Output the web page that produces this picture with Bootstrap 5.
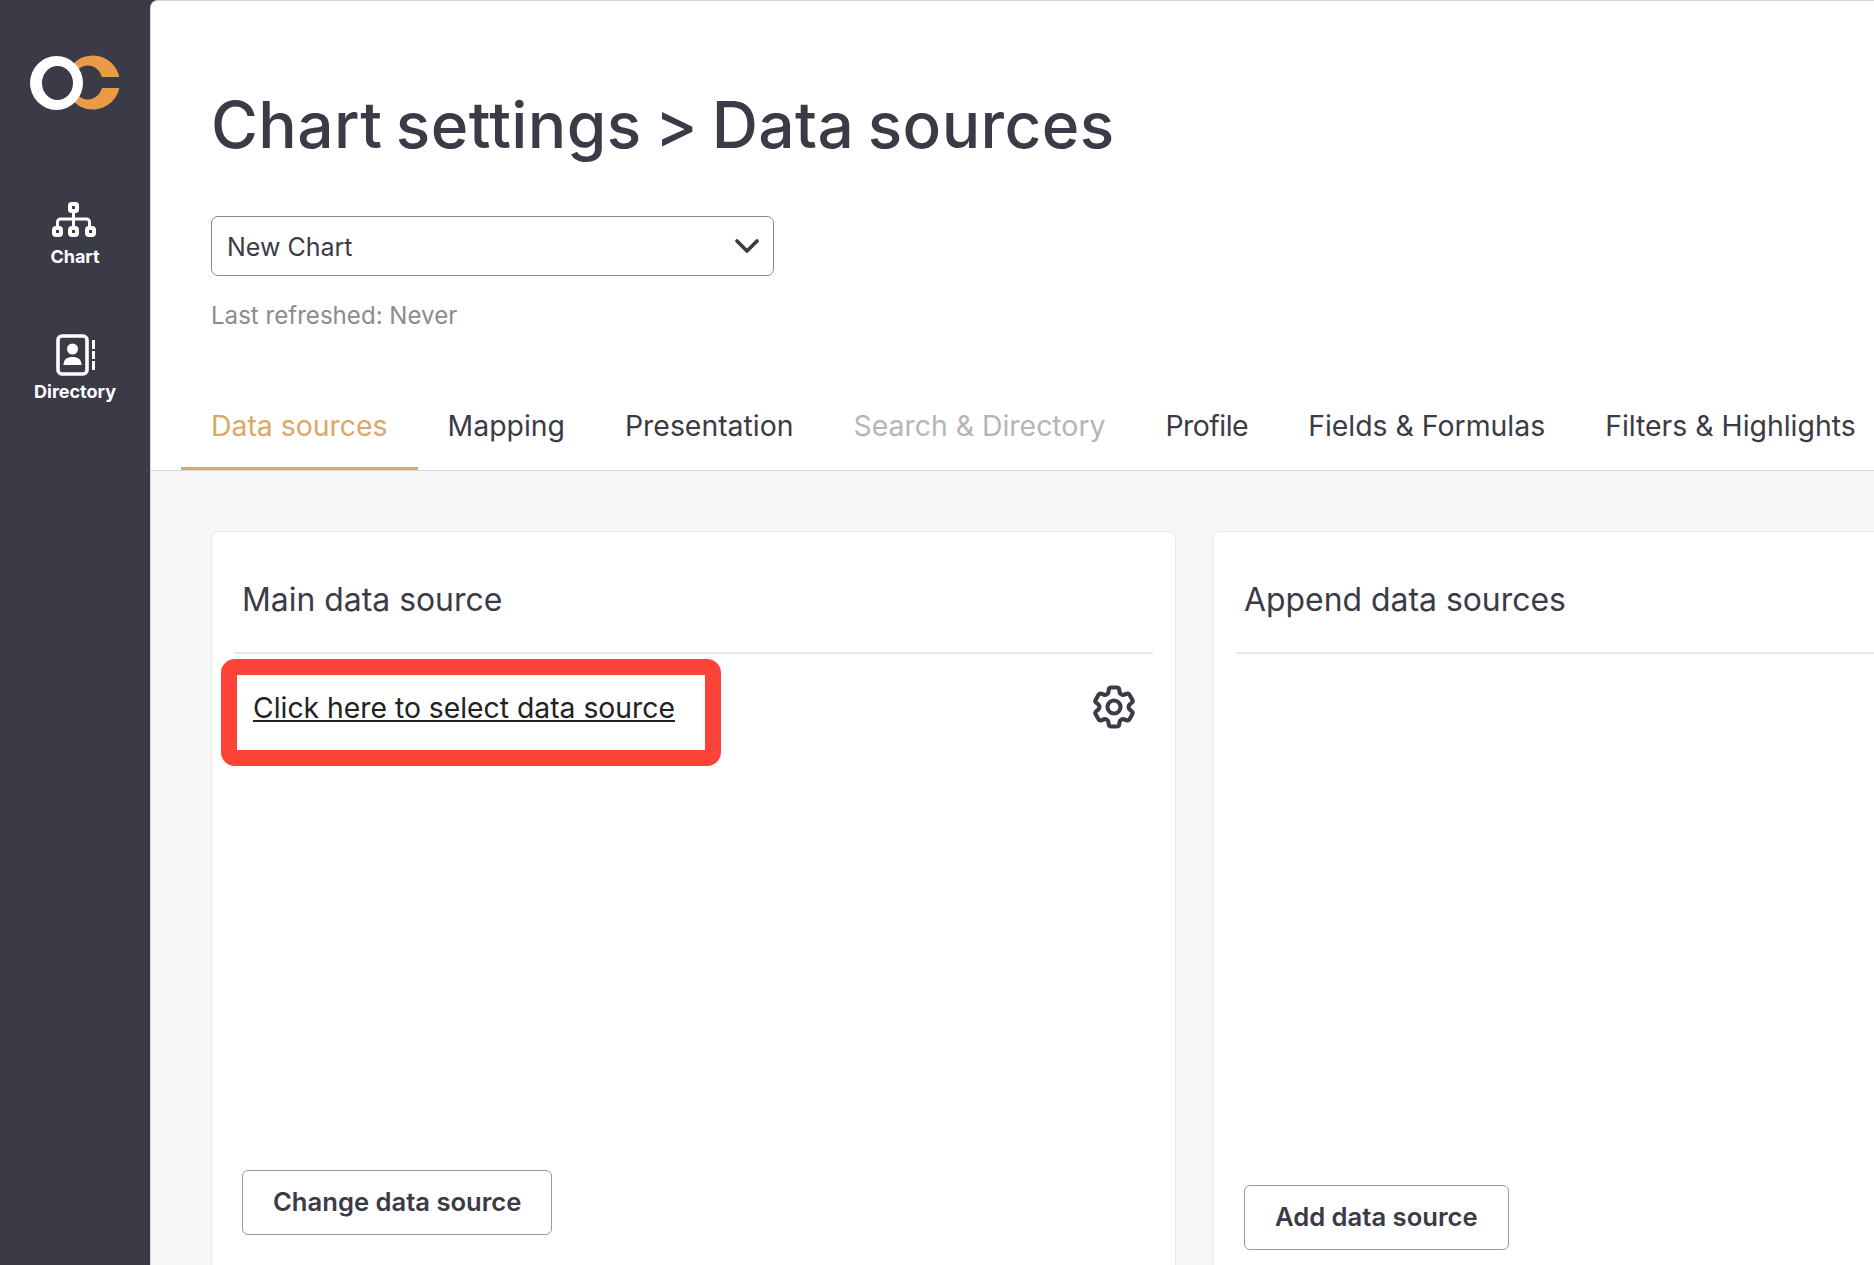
<!DOCTYPE html>
<html lang="en">
<head>
    <meta charset="UTF-8">
    <meta name="viewport" content="width=device-width, initial-scale=1.0">
    <title>Chart settings - Data sources</title>
    <link rel="stylesheet" href="https://cdn.jsdelivr.net/npm/bootstrap@5.3.0/dist/css/bootstrap.min.css">
    <style>
        html, body {
            height: 100%;
            overflow: hidden;
        }
        body {
            background-color: #3b3b47;
            font-family: Inter, "Liberation Sans", sans-serif;
            color: #3b3b47;
        }
        .app-side {
            width: 150px;
            height: 1265px;
            color: #fff;
        }
        .side-logo {
            padding-top: 55px;
            padding-left: 29px;
            height: 202px;
        }
        .side-item {
            font-size: 18px;
            font-weight: 700;
            line-height: 20px;
        }
        .side-chart { height: 132px; }
        .side-dir span { margin-top: 6px; }
        .app-main {
            width: 1724px;
            height: 1265px;
            background: #f7f7f7;
            border-top-left-radius: 8px;
            border-left: 1px solid #d8d8dc;
            border-top: 1px solid #d8d8dc;
            overflow: hidden;
        }
        .top-area {
            height: 470px;
            background: #fff;
            border-bottom: 1px solid #d8d8dc;
            padding: 85px 0 0 30px;
        }
        .page-title {
            font-size: 64px;
            font-weight: 500;
            line-height: 78px;
            letter-spacing: .4px;
            word-spacing: -4px;
            margin: 0 0 0 30px;
        }
        .chart-pick {
            width: 563px;
            height: 60px;
            margin: 52px 0 0 30px;
            font-size: 25px;
            color: #3b3b47;
            border: 1px solid #8a8a8a;
            border-radius: 7px;
            padding: 4px 15px 0;
            background-image: url("data:image/svg+xml,%3csvg xmlns='http://www.w3.org/2000/svg' viewBox='0 0 24 16'%3e%3cpath fill='none' stroke='%233b3b47' stroke-width='3.6' stroke-linecap='round' stroke-linejoin='round' d='M2 3l10 10L22 3'/%3e%3c/svg%3e");
            background-size: 24px 16px;
            background-position: right 14px center;
        }
        .refresh-note {
            font-size: 24.1px;
            line-height: 30px;
            color: #8c8c8c;
            margin: 25px 0 0 30px;
        }
        .tab-row {
            margin-top: 62px;
            flex-wrap: nowrap;
            white-space: nowrap;
        }
        .tab-row .nav-link {
            height: 77px;
            padding: 15px 30px 0;
            font-size: 28.4px;
            line-height: 36px;
            color: #3b3b47;
            border-bottom: 3px solid transparent;
        }
        .tab-row .nav-link.active {
            color: #dca767;
            border-bottom-color: #dca767;
        }
        .tab-row .nav-link.disabled {
            color: #b5b5b8;
        }
        .tab-row .nav-link.tab-tight {
            letter-spacing: -.5px;
        }
        .panels {
            gap: 37px;
            padding: 60px 0 0 60px;
        }
        .panel-card {
            width: 965px;
            height: 780px;
            flex-shrink: 0;
            border: 1px solid #e8e8ea;
            border-radius: 7px;
            padding: 0 22px;
        }
        .panel-head {
            font-size: 31.9px;
            line-height: 40px;
            font-weight: 400;
            padding: 48px 0 32px 8px;
            border-bottom: 2px solid #e8e8ea;
            margin: 0;
        }
        .source-row {
            height: 110px;
            padding: 32px 13px 0 19px;
        }
        .source-link {
            font-size: 28.3px;
            line-height: 44px;
            color: #222;
        }
        .gear-icon {
            width: 52px;
            height: 52px;
            margin-top: -5px;
        }
        .red-mark {
            position: absolute;
            left: -13px;
            top: 5px;
            width: 500px;
            height: 107px;
            border: 16px solid #fb4437;
            border-radius: 14px;
        }
        .outline-action {
            font-size: 25.6px;
            font-weight: 600;
            color: #3b3b47;
            height: 65px;
            border: 1px solid #999;
            border-radius: 6px;
            padding: 0 30px;
            margin-left: 8px;
        }
        .action-main { margin-top: 406px; }
        .action-add { margin-top: 531px; }
    </style>
</head>
<body>
    <div class="d-flex">
        <div class="app-side flex-shrink-0">
            <div class="side-logo">
                <svg width="94" height="58" viewBox="0 0 94 58">
                    <path d="M90.300 22A27 27 0 1 0 90.300 33L73 33A15 17 0 1 1 73 22Z" fill="#e99c45"/>
                    <ellipse cx="28.500" cy="28" rx="16" ry="18" fill="#3b3b47"/>
                    <path fill-rule="evenodd" fill="#fff" d="M1 28a26.500 27 0 1 0 53 0a26.500 27 0 1 0-53 0ZM13 28a15.500 17 0 1 1 31 0a15.500 17 0 1 1-31 0Z"/>
                </svg>
            </div>
            <div class="side-item side-chart d-flex flex-column align-items-center">
                <svg width="46" height="37" viewBox="0 0 46 37" fill="none" stroke="#fff">
                    <path stroke-width="3" d="M21.500 9v17M5.500 26v-6a3 3 0 0 1 3-3h26a3 3 0 0 1 3 3v6"/>
                    <g stroke-width="4">
                        <rect x="18" y="2" width="7" height="7" rx="1.500"/>
                        <rect x="2" y="26" width="7" height="7" rx="2"/>
                        <rect x="18" y="26" width="7" height="7" rx="2"/>
                        <rect x="35" y="26" width="7" height="7" rx="2"/>
                    </g>
                </svg>
                <span class="mt-2">Chart</span>
            </div>
            <div class="side-item side-dir d-flex flex-column align-items-center">
                <svg width="42" height="42" viewBox="0 0 42 42" fill="none">
                    <rect x="4" y="2" width="29" height="38" rx="4" stroke="#fff" stroke-width="3.6"/>
                    <circle cx="18.500" cy="15" r="5.500" fill="#fff"/>
                    <path d="M9.500 31c0-6 4-8 9-8s9 2 9 8z" fill="#fff"/>
                    <path d="M39.500 6v9M39.500 17v8M39.500 27v9" stroke="#fff" stroke-width="3"/>
                </svg>
                <span>Directory</span>
            </div>
        </div>

        <div class="app-main flex-shrink-0">
            <div class="top-area">
                <h1 class="page-title">Chart settings &gt; Data sources</h1>
                <select class="form-select chart-pick">
                    <option>New Chart</option>
                </select>
                <p class="refresh-note">Last refreshed: Never</p>
                <ul class="nav tab-row">
                    <li class="nav-item"><a class="nav-link active" href="#">Data sources</a></li>
                    <li class="nav-item"><a class="nav-link" href="#">Mapping</a></li>
                    <li class="nav-item"><a class="nav-link" href="#">Presentation</a></li>
                    <li class="nav-item"><a class="nav-link disabled" href="#">Search &amp; Directory</a></li>
                    <li class="nav-item"><a class="nav-link tab-tight" href="#">Profile</a></li>
                    <li class="nav-item"><a class="nav-link" href="#">Fields &amp; Formulas</a></li>
                    <li class="nav-item"><a class="nav-link" href="#">Filters &amp; Highlights</a></li>
                </ul>
            </div>
            <div class="panels d-flex">
                <div class="panel-card bg-white">
                    <h2 class="panel-head">Main data source</h2>
                    <div class="source-row position-relative d-flex justify-content-between align-items-start">
                        <a class="source-link" href="#">Click here to select data source</a>
                        <svg class="gear-icon" viewBox="0 0 24 24" fill="none" stroke="#3b3b47" stroke-width="1.9">
                            <path d="M9.594 3.94c.09-.542.56-.94 1.11-.94h2.593c.55 0 1.02.398 1.11.94l.213 1.281c.063.374.313.686.645.87.074.04.147.083.22.127.325.196.72.257 1.075.124l1.217-.456a1.125 1.125 0 0 1 1.37.49l1.296 2.247a1.125 1.125 0 0 1-.26 1.431l-1.003.827c-.293.241-.438.613-.43.992a7.723 7.723 0 0 1 0 .255c-.008.378.137.75.43.991l1.004.827c.424.35.534.955.26 1.43l-1.298 2.247a1.125 1.125 0 0 1-1.369.491l-1.217-.456c-.355-.133-.75-.072-1.076.124a6.47 6.47 0 0 1-.22.128c-.331.183-.581.495-.644.869l-.213 1.281c-.09.543-.56.94-1.11.94h-2.594c-.55 0-1.019-.398-1.11-.94l-.213-1.281c-.062-.374-.312-.686-.644-.87a6.52 6.52 0 0 1-.22-.127c-.325-.196-.72-.257-1.076-.124l-1.217.456a1.125 1.125 0 0 1-1.369-.49l-1.297-2.247a1.125 1.125 0 0 1 .26-1.431l1.004-.827c.292-.24.437-.613.43-.991a6.932 6.932 0 0 1 0-.255c.007-.38-.138-.751-.43-.992l-1.004-.827a1.125 1.125 0 0 1-.26-1.43l1.297-2.247a1.125 1.125 0 0 1 1.37-.491l1.216.456c.356.133.751.072 1.076-.124.072-.044.146-.086.22-.128.332-.183.582-.495.644-.869l.214-1.28Z"/>
                            <circle cx="12" cy="12" r="3"/>
                        </svg>
                        <div class="red-mark"></div>
                    </div>
                    <button class="btn btn-light bg-white outline-action action-main">Change data source</button>
                </div>
                <div class="panel-card bg-white">
                    <h2 class="panel-head">Append data sources</h2>
                    <button class="btn btn-light bg-white outline-action action-add">Add data source</button>
                </div>
            </div>
        </div>
    </div>
    <script src="https://cdn.jsdelivr.net/npm/bootstrap@5.3.0/dist/js/bootstrap.bundle.min.js"></script>
</body>
</html>
